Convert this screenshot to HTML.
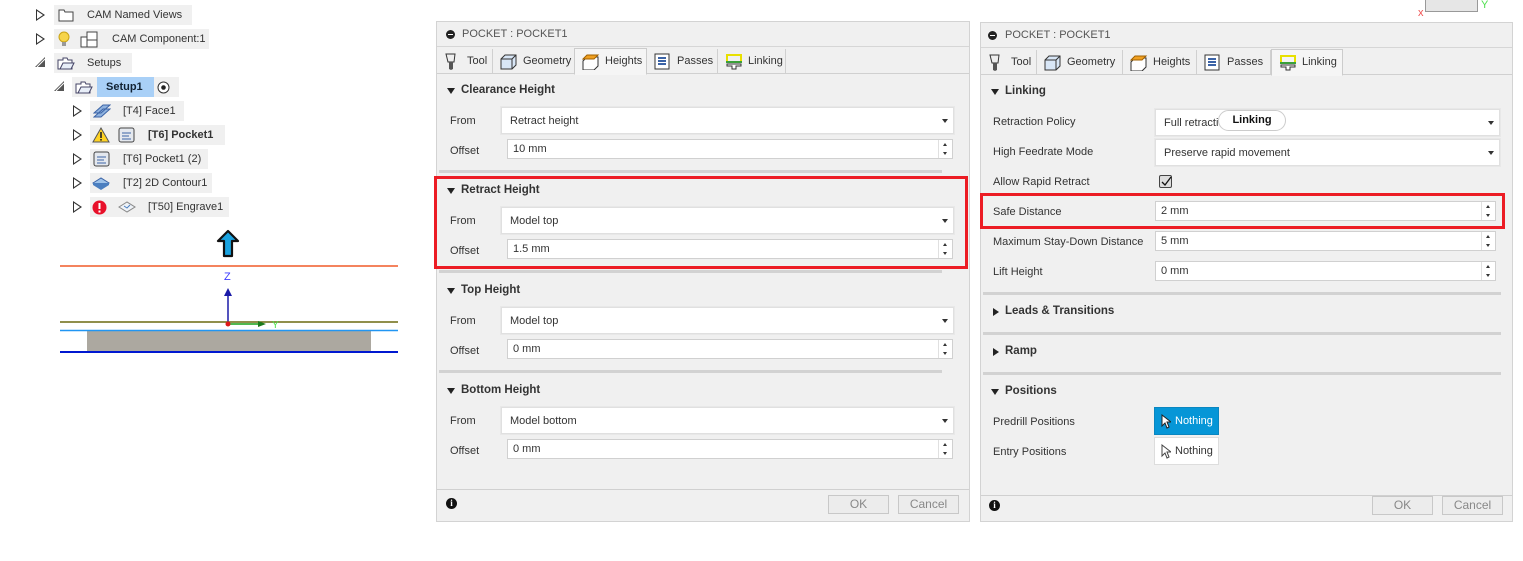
<!DOCTYPE html>
<html><head><meta charset="utf-8"><style>
*{margin:0;padding:0;box-sizing:border-box}
body{width:1523px;height:561px;background:#fff;position:relative;overflow:hidden;font-family:"Liberation Sans",Arial,sans-serif;font-size:11px;color:#333}
.a{position:absolute}
.dlg{position:absolute;background:#f0f0f0;border:1px solid #d3d3d3}
.hd{position:absolute;left:0;right:0;top:0;height:25px;border-bottom:1px solid #d6d6d6;color:#555}
.tabs{position:absolute;left:0;right:0;top:25px;height:27px;border-bottom:1px solid #d0d0d0}
.tab{position:absolute;top:2px;height:25px;line-height:24px;padding-left:30px;border-right:1px solid #d0d0d0}
.tab.on{background:#f5f5f5;border:1px solid #ccc;border-bottom:1px solid #f5f5f5;top:1px;height:27px;line-height:25px}
.tab svg{position:absolute;left:7px;top:4px}
.sec{position:absolute;font-weight:bold;font-size:11.5px;color:#333}
.sec:before{content:"";position:absolute;left:-14px;top:4px;border-left:4px solid transparent;border-right:4px solid transparent;border-top:6px solid #222}
.sec.c:before{left:-12px;top:3px;border-top:4px solid transparent;border-bottom:4px solid transparent;border-left:6px solid #222;border-right:0}
.lbl{position:absolute}
.sel{position:absolute;background:#fff;border:1px solid #e0e0e0;height:27px;line-height:26px;padding-left:8px;box-shadow:0 0 0 1px #e8e8e8}
.sel:after{content:"";position:absolute;right:5px;top:11px;border-left:3.5px solid transparent;border-right:3.5px solid transparent;border-top:4px solid #333}
.inp{position:absolute;background:#fff;border:1px solid #d0d0d0;height:20px;line-height:19px;padding-left:5px}
.inp i{position:absolute;right:0;top:0;width:14px;height:18px;border-left:1px solid #e0e0e0}
.inp i:before{content:"";position:absolute;left:4px;top:3px;border-left:2.5px solid transparent;border-right:2.5px solid transparent;border-bottom:3px solid #333}
.inp i:after{content:"";position:absolute;left:4px;top:12px;border-left:2.5px solid transparent;border-right:2.5px solid transparent;border-top:3px solid #333}
.sep{position:absolute;height:3px;background:#d2d2d2}
.btn{position:absolute;height:19px;border:1px solid #c8c8c8;background:#ececec;color:#888;text-align:center;line-height:17px;font-size:12px}
.red{position:absolute;border:3px solid #ec1c24}
.row{position:absolute;height:20px;background:#f0f0f0;line-height:21px}
.exp{position:absolute;width:0;height:0;border-top:6px solid transparent;border-bottom:6px solid transparent;border-left:9px solid #333}
.exp:after{content:"";position:absolute;left:-8px;top:-4px;border-top:4px solid transparent;border-bottom:4px solid transparent;border-left:6px solid #fff}
.info{position:absolute;width:11px;height:11px;border-radius:50%;background:#111;color:#fff;font-weight:bold;font-size:9px;text-align:center;line-height:11px;font-family:"Liberation Serif",serif}
</style></head><body>

<!-- TREE -->
<div class="exp a" style="left:36px;top:9px"></div>
<div class="row" style="left:54px;top:5px;width:138px"><svg class="a" style="left:4px;top:3px" width="16" height="14"><path d="M1 2h5l1 2h8v9H1z" fill="#fff" stroke="#444"/></svg><span class="a" style="left:33px">CAM Named Views</span></div>
<div class="exp a" style="left:36px;top:33px"></div>
<div class="row" style="left:54px;top:29px;width:155px"><svg class="a" style="left:4px;top:2px" width="12" height="16"><circle cx="6" cy="6" r="5" fill="#f6d44a" stroke="#c9a316"/><rect x="4" y="11" width="4" height="4" fill="#999"/></svg><svg class="a" style="left:26px;top:2px" width="18" height="17"><path d="M1 6h6V1h10v15H1z" fill="#fff" stroke="#444"/><path d="M7 6v10M7 9h10" stroke="#444" fill="none"/></svg><span class="a" style="left:58px">CAM Component:1</span></div>
<svg class="a" style="left:34px;top:56px" width="12" height="12"><path d="M11 1L1 11h10z" fill="#555"/><path d="M11 3L3 11" stroke="#fff"/></svg>
<div class="row" style="left:54px;top:53px;width:78px"><svg class="a" style="left:3px;top:2px" width="18" height="16"><path d="M1 5h5v-2h4l1 2h4v9H1z" fill="#fff" stroke="#446"/><path d="M3 14l3-6h11l-3 6z" fill="#e8eef8" stroke="#446"/></svg><span class="a" style="left:33px">Setups</span></div>
<svg class="a" style="left:53px;top:80px" width="12" height="12"><path d="M11 1L1 11h10z" fill="#555"/><path d="M11 3L3 11" stroke="#fff"/></svg>
<div class="row" style="left:72px;top:77px;width:107px"><svg class="a" style="left:3px;top:2px" width="18" height="16"><path d="M1 5h5v-2h4l1 2h4v9H1z" fill="#fff" stroke="#446"/><path d="M3 14l3-6h11l-3 6z" fill="#e8eef8" stroke="#446"/></svg><div class="a" style="left:25px;top:0;width:57px;height:20px;background:#a9d0f7"></div><span class="a" style="left:34px;font-weight:bold;color:#123">Setup1</span><svg class="a" style="left:85px;top:4px" width="13" height="13"><circle cx="6.5" cy="6.5" r="5.5" fill="#fff" stroke="#333"/><circle cx="6.5" cy="6.5" r="2.3" fill="#222"/></svg></div>

<div class="exp a" style="left:73px;top:105px"></div>
<div class="row" style="left:90px;top:101px;width:94px"><svg class="a" style="left:3px;top:3px" width="18" height="14"><path d="M1 9l9-8h7L8 9z M1 13l9-8h7l-9 8z" fill="#8fb2de" stroke="#3b63a6"/></svg><span class="a" style="left:33px">[T4] Face1</span></div>
<div class="exp a" style="left:73px;top:129px"></div>
<div class="row" style="left:90px;top:125px;width:135px"><svg class="a" style="left:2px;top:2px" width="18" height="16"><path d="M9 1L17 15H1z" fill="#ffd324" stroke="#555"/><rect x="8.2" y="5" width="1.6" height="6" fill="#222"/><rect x="8.2" y="12" width="1.6" height="1.6" fill="#222"/></svg><svg class="a" style="left:28px;top:2px" width="17" height="16"><rect x="1" y="1" width="15" height="14" rx="2" fill="#e4e8ee" stroke="#444"/><path d="M4 6h9M4 9h7M4 12h9" stroke="#3b63a6" fill="none"/></svg><span class="a" style="left:58px;font-weight:bold">[T6] Pocket1</span></div>
<div class="exp a" style="left:73px;top:153px"></div>
<div class="row" style="left:90px;top:149px;width:118px"><svg class="a" style="left:3px;top:2px" width="17" height="16"><rect x="1" y="1" width="15" height="14" rx="2" fill="#e4e8ee" stroke="#444"/><path d="M4 6h9M4 9h7M4 12h9" stroke="#3b63a6" fill="none"/></svg><span class="a" style="left:33px">[T6] Pocket1 (2)</span></div>
<div class="exp a" style="left:73px;top:177px"></div>
<div class="row" style="left:90px;top:173px;width:122px"><svg class="a" style="left:2px;top:3px" width="18" height="14"><path d="M1 7l8-5 8 5-8 5z" fill="#9ec3ea" stroke="#3b63a6"/><path d="M1 7v2l8 5 8-5V7" fill="#4b7fc0"/></svg><span class="a" style="left:33px">[T2] 2D Contour1</span></div>
<div class="exp a" style="left:73px;top:201px"></div>
<div class="row" style="left:90px;top:197px;width:139px"><svg class="a" style="left:2px;top:3px" width="15" height="15"><circle cx="7.5" cy="7.5" r="7" fill="#e8102a"/><rect x="6.5" y="3" width="2" height="6" fill="#fff"/><rect x="6.5" y="10.5" width="2" height="2" fill="#fff"/></svg><svg class="a" style="left:28px;top:3px" width="18" height="14"><path d="M1 7l8-5 8 5-8 5z" fill="#eef2f7" stroke="#888"/><path d="M6 6l3 2 3-3" stroke="#4b7fc0" fill="none"/></svg><span class="a" style="left:58px">[T50] Engrave1</span></div>

<!-- viewport -->
<svg class="a" style="left:0;top:225px" width="420" height="135">
<path d="M228 6l-10 10h6v15h8V16h6z" fill="#1aa3e0" stroke="#111" stroke-width="2.2" stroke-linejoin="round"/>
<line x1="60" y1="41" x2="398" y2="41" stroke="#f05a28" stroke-width="1.5"/>
<text x="224" y="55" fill="#3b3bff" font-size="11" font-family="Liberation Sans">Z</text>
<line x1="228" y1="65" x2="228" y2="99" stroke="#1a1aa8" stroke-width="1.5"/>
<path d="M224 71l4-8 4 8z" fill="#1a1aa8"/>
<rect x="87" y="106" width="284" height="21" fill="#aca8a0"/>
<line x1="60" y1="97" x2="398" y2="97" stroke="#6b6a10" stroke-width="1.5"/>
<line x1="60" y1="105.5" x2="398" y2="105.5" stroke="#2196f3" stroke-width="1.5"/>
<line x1="60" y1="127" x2="398" y2="127" stroke="#0018d0" stroke-width="2"/>
<line x1="228" y1="99" x2="262" y2="99" stroke="#16a016" stroke-width="1.5"/>
<path d="M258 96l8 3-8 3z" fill="#1a7a1a"/>
<text x="272" y="103" fill="#4ce44c" font-size="10">Y</text>
<circle cx="228" cy="99" r="2.5" fill="#e01818"/>
</svg>

<!-- top right mini -->
<div class="a" style="left:1425px;top:-2px;width:53px;height:14px;background:#e6e6e6;border:1px solid #999"></div>
<span class="a" style="left:1418px;top:7px;color:#f05050;font-size:11px">x</span>
<span class="a" style="left:1481px;top:-1px;color:#50e050;font-size:11px">Y</span>

<!-- DIALOG 1 -->
<div class="dlg" style="left:436px;top:21px;width:534px;height:501px">
 <div class="hd"><div class="a" style="left:9px;top:8px;width:9px;height:9px;border-radius:50%;background:#222"><div class="a" style="left:2px;top:4px;width:5px;height:1px;background:#fff"></div></div><span class="a" style="left:25px;top:6px">POCKET : POCKET1</span></div>
 <div class="tabs">
  <div class="tab" style="left:0;width:56px"><svg width="14" height="18"><path d="M2 1h9l-1 8H4z" fill="#eee" stroke="#333"/><path d="M5 9h4v7l-2 1-2-1z" fill="#555"/></svg>Tool</div>
  <div class="tab" style="left:56px;width:82px"><svg width="18" height="17"><path d="M1 6l4-4h11v10l-4 4H1z" fill="#d8e6f6" stroke="#333"/><path d="M1 6h11v10M12 6l4-4" stroke="#333" fill="none"/></svg>Geometry</div>
  <div class="tab on" style="left:137px;width:73px"><svg width="18" height="17"><path d="M1 8l4-4h11v9l-4 4H1z" fill="#fff" stroke="#333"/><path d="M1 6l4-4h11l-4 4z" fill="#f0a020" stroke="#a06000"/></svg>Heights</div>
  <div class="tab" style="left:210px;width:71px"><svg width="16" height="17"><rect x="1" y="1" width="14" height="15" fill="#fff" stroke="#333"/><path d="M4 5h8M4 8h8M4 11h8" stroke="#3b63a6" stroke-width="2"/></svg>Passes</div>
  <div class="tab" style="left:281px;width:68px"><svg width="18" height="17"><path d="M2 9V2h14v7" fill="none" stroke="#e8e000" stroke-width="2"/><path d="M1 9h16" stroke="#3aa03a" stroke-width="2"/><path d="M2 11h14v2h-5v3H7v-3H2z" fill="#fff" stroke="#333"/></svg>Linking</div>
 </div>
 <div class="sec" style="left:24px;top:62px">Clearance Height</div>
 <div class="lbl" style="left:13px;top:93px">From</div><div class="sel" style="left:64px;top:85px;width:453px">Retract height</div>
 <div class="lbl" style="left:13px;top:123px">Offset</div><div class="inp" style="left:70px;top:117px;width:446px">10 mm<i></i></div>
 <div class="sep" style="left:2px;top:148px;width:503px"></div>
 <div class="sec" style="left:24px;top:162px">Retract Height</div>
 <div class="lbl" style="left:13px;top:193px">From</div><div class="sel" style="left:64px;top:185px;width:453px">Model top</div>
 <div class="lbl" style="left:13px;top:223px">Offset</div><div class="inp" style="left:70px;top:217px;width:446px">1.5 mm<i></i></div>
 <div class="sep" style="left:2px;top:248px;width:503px"></div>
 <div class="sec" style="left:24px;top:262px">Top Height</div>
 <div class="lbl" style="left:13px;top:293px">From</div><div class="sel" style="left:64px;top:285px;width:453px">Model top</div>
 <div class="lbl" style="left:13px;top:323px">Offset</div><div class="inp" style="left:70px;top:317px;width:446px">0 mm<i></i></div>
 <div class="sep" style="left:2px;top:348px;width:503px"></div>
 <div class="sec" style="left:24px;top:362px">Bottom Height</div>
 <div class="lbl" style="left:13px;top:393px">From</div><div class="sel" style="left:64px;top:385px;width:453px">Model bottom</div>
 <div class="lbl" style="left:13px;top:423px">Offset</div><div class="inp" style="left:70px;top:417px;width:446px">0 mm<i></i></div>
 <div class="a" style="left:0;right:0;top:467px;height:1px;background:#d0d0d0"></div>
 <div class="info" style="left:9px;top:476px">i</div>
 <div class="btn" style="left:391px;top:473px;width:61px">OK</div>
 <div class="btn" style="left:461px;top:473px;width:61px">Cancel</div>
</div>
<div class="red" style="left:434px;top:176px;width:534px;height:93px"></div>

<!-- DIALOG 2 -->
<div class="dlg" style="left:980px;top:22px;width:533px;height:500px">
 <div class="hd"><div class="a" style="left:7px;top:8px;width:9px;height:9px;border-radius:50%;background:#222"><div class="a" style="left:2px;top:4px;width:5px;height:1px;background:#fff"></div></div><span class="a" style="left:24px;top:6px">POCKET : POCKET1</span></div>
 <div class="tabs">
  <div class="tab" style="left:0;width:56px"><svg width="14" height="18"><path d="M2 1h9l-1 8H4z" fill="#eee" stroke="#333"/><path d="M5 9h4v7l-2 1-2-1z" fill="#555"/></svg>Tool</div>
  <div class="tab" style="left:56px;width:86px"><svg width="18" height="17"><path d="M1 6l4-4h11v10l-4 4H1z" fill="#d8e6f6" stroke="#333"/><path d="M1 6h11v10M12 6l4-4" stroke="#333" fill="none"/></svg>Geometry</div>
  <div class="tab" style="left:142px;width:74px"><svg width="18" height="17"><path d="M1 8l4-4h11v9l-4 4H1z" fill="#fff" stroke="#333"/><path d="M1 6l4-4h11l-4 4z" fill="#f0a020" stroke="#a06000"/></svg>Heights</div>
  <div class="tab" style="left:216px;width:74px"><svg width="16" height="17"><rect x="1" y="1" width="14" height="15" fill="#fff" stroke="#333"/><path d="M4 5h8M4 8h8M4 11h8" stroke="#3b63a6" stroke-width="2"/></svg>Passes</div>
  <div class="tab on" style="left:290px;width:72px"><svg width="18" height="17"><path d="M2 9V2h14v7" fill="none" stroke="#e8e000" stroke-width="2"/><path d="M1 9h16" stroke="#3aa03a" stroke-width="2"/><path d="M2 11h14v2h-5v3H7v-3H2z" fill="#fff" stroke="#333"/></svg>Linking</div>
 </div>
 <div class="sec" style="left:24px;top:62px">Linking</div>
 <div class="lbl" style="left:12px;top:93px">Retraction Policy</div><div class="sel" style="left:174px;top:86px;width:345px">Full retractio</div>
 <div class="a" style="left:237px;top:87px;width:68px;height:21px;border:1px solid #ccc;border-radius:11px;background:#fff;font-weight:bold;color:#111;text-align:center;line-height:19px">Linking</div>
 <div class="lbl" style="left:12px;top:123px">High Feedrate Mode</div><div class="sel" style="left:174px;top:116px;width:345px">Preserve rapid movement</div>
 <div class="lbl" style="left:12px;top:153px">Allow Rapid Retract</div>
 <div class="a" style="left:178px;top:152px;width:13px;height:13px;border:1px solid #444;border-radius:2px;background:#ddd"><svg class="a" style="left:1px;top:0" width="11" height="11"><path d="M1 6l3 3 6-8" stroke="#111" fill="none" stroke-width="1.3"/></svg></div>
 <div class="lbl" style="left:12px;top:183px">Safe Distance</div><div class="inp" style="left:174px;top:178px;width:341px">2 mm<i></i></div>
 <div class="lbl" style="left:12px;top:213px">Maximum Stay-Down Distance</div><div class="inp" style="left:174px;top:208px;width:341px">5 mm<i></i></div>
 <div class="lbl" style="left:12px;top:243px">Lift Height</div><div class="inp" style="left:174px;top:238px;width:341px">0 mm<i></i></div>
 <div class="sep" style="left:2px;top:269px;width:518px"></div>
 <div class="sec c" style="left:24px;top:282px">Leads &amp; Transitions</div>
 <div class="sep" style="left:2px;top:309px;width:518px"></div>
 <div class="sec c" style="left:24px;top:322px">Ramp</div>
 <div class="sep" style="left:2px;top:349px;width:518px"></div>
 <div class="sec" style="left:24px;top:362px">Positions</div>
 <div class="lbl" style="left:12px;top:393px">Predrill Positions</div>
 <div class="a" style="left:173px;top:384px;width:65px;height:28px;background:#0696d7;border:1px solid #0a86c0;color:#fff;line-height:26px;padding-left:20px"><svg class="a" style="left:6px;top:6px" width="10" height="15"><path d="M1 1v11l3-3 2 5 2-1-2-5h4z" fill="#fff" stroke="#222"/></svg>Nothing</div>
 <div class="lbl" style="left:12px;top:423px">Entry Positions</div>
 <div class="a" style="left:173px;top:414px;width:65px;height:28px;background:#fff;border:1px solid #ddd;line-height:26px;padding-left:20px"><svg class="a" style="left:6px;top:6px" width="10" height="15"><path d="M1 1v11l3-3 2 5 2-1-2-5h4z" fill="#fff" stroke="#444"/></svg>Nothing</div>
 <div class="a" style="left:0;right:0;top:472px;height:1px;background:#d0d0d0"></div>
 <div class="info" style="left:8px;top:477px">i</div>
 <div class="btn" style="left:391px;top:473px;width:61px">OK</div>
 <div class="btn" style="left:461px;top:473px;width:61px">Cancel</div>
</div>
<div class="red" style="left:980px;top:193px;width:525px;height:36px"></div>

</body></html>
